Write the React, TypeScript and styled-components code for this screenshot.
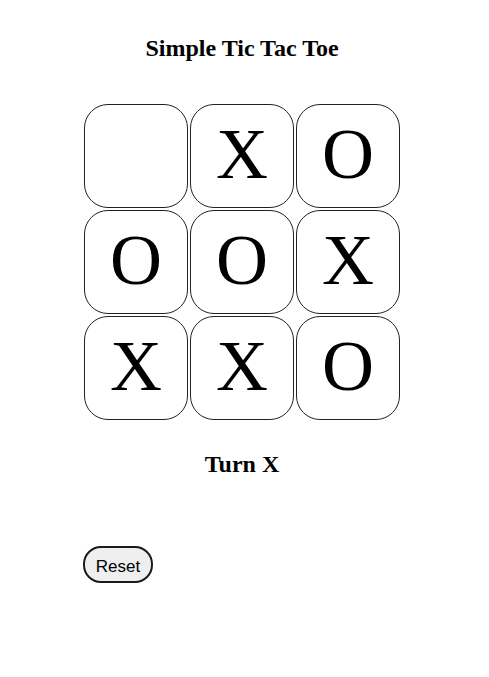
import React, { useState } from "react";
import styled, { createGlobalStyle } from "styled-components";

const Global = createGlobalStyle`
  html, body { margin: 0; padding: 0; background: #fff; }
  body { font-family: "Liberation Serif", "Times New Roman", serif; color: #000; }
`;

const Page = styled.div`
  width: 484px;
  display: flex;
  flex-direction: column;
  align-items: center;
  padding-top: 34px;
`;

const Title = styled.h2`
  margin: 0;
  font-size: 24px;
  line-height: 28px;
  font-weight: bold;
`;

const Board = styled.div`
  margin-top: 42px;
  display: grid;
  grid-template-columns: repeat(3, 104px);
  grid-auto-rows: 104px;
  gap: 2px;
`;

const Cell = styled.button`
  box-sizing: border-box;
  width: 104px;
  height: 104px;
  margin: 0;
  padding: 0 0 4px 0;
  border: 1px solid #222;
  border-radius: 24px;
  background: #fff;
  display: flex;
  align-items: center;
  justify-content: center;
  font-family: "Liberation Serif", "Times New Roman", serif;
  font-size: 72px;
  line-height: 1;
  color: #000;
  cursor: pointer;
`;

const Status = styled.h2`
  margin: 30px 0 0 0;
  font-size: 24px;
  line-height: 28px;
  font-weight: bold;
`;

const ResetButton = styled.button`
  align-self: flex-start;
  margin: 68px 0 0 83px;
  box-sizing: border-box;
  width: 70px;
  height: 37px;
  padding: 4px 0 0 0;
  border: 2px solid #1a1a1a;
  border-radius: 18px;
  background: #efefef;
  font-family: "Liberation Sans", Arial, sans-serif;
  font-size: 17px;
  color: #000;
  cursor: pointer;
`;

const initial = ["", "X", "O", "O", "O", "X", "X", "X", "O"];

export default function App() {
  const [cells, setCells] = useState<string[]>(initial);
  return (
    <>
      <Global />
      <Page>
        <Title>Simple Tic Tac Toe</Title>
        <Board>
          {cells.map((v, i) => (
            <Cell key={i}>{v}</Cell>
          ))}
        </Board>
        <Status>Turn X</Status>
        <ResetButton onClick={() => setCells(Array(9).fill(""))}>Reset</ResetButton>
      </Page>
    </>
  );
}
